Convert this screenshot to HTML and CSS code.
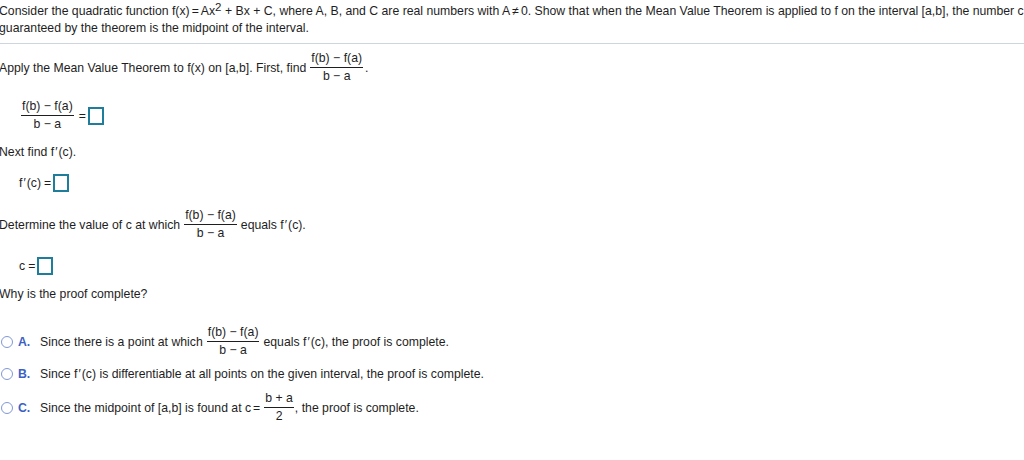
FILE: index.html
```html
<!DOCTYPE html>
<html>
<head>
<meta charset="utf-8">
<link rel="stylesheet" href="styles.css">
</head>
<body>
<div class="page">
  <div class="intro">Consider the quadratic function f(x)<span class="eq">=</span>Ax<sup class="sup">2</sup> + Bx + C, where A, B, and C are real numbers with A<span class="ne">≠</span>0. Show that when the Mean Value Theorem is applied to f on the interval [a,b], the number c<br>guaranteed by the theorem is the midpoint of the interval.</div>

  <div class="row r1">
    <span>Apply the Mean Value Theorem to f(x) on [a,b]. First, find</span>
    <span class="frac"><span class="num">f(b) − f(a)</span><span class="den">b − a</span></span><span class="dot">.</span>
  </div>

  <div class="row r2 indent22">
    <span class="frac f0"><span class="num">f(b) − f(a)</span><span class="den">b − a</span></span>
    <span class="eqs">=</span><span class="box"></span>
  </div>

  <div class="row r3">Next find f<span class="pr">′</span>(c).</div>

  <div class="row r4 indent20">
    <span>f<span class="pr">′</span>(c)</span><span class="eqs">=</span><span class="box"></span>
  </div>

  <div class="row r5">
    <span>Determine the value of c at which</span>
    <span class="frac"><span class="num">f(b) − f(a)</span><span class="den">b − a</span></span>
    <span>equals f<span class="pr">′</span>(c).</span>
  </div>

  <div class="row r6 indent20">
    <span>c</span><span class="eqs">=</span><span class="box"></span>
  </div>

  <div class="row r7">Why is the proof complete?</div>

  <div class="row opt oa">
    <span class="radio"></span><span class="lbl">A.</span>
    <span>Since there is a point at which</span>
    <span class="frac"><span class="num">f(b) − f(a)</span><span class="den">b − a</span></span>
    <span>equals f<span class="pr">′</span>(c), the proof is complete.</span>
  </div>

  <div class="row opt ob">
    <span class="radio"></span><span class="lbl">B.</span>
    <span>Since f<span class="pr">′</span>(c) is differentiable at all points on the given interval, the proof is complete.</span>
  </div>

  <div class="row opt oc">
    <span class="radio"></span><span class="lbl">C.</span>
    <span>Since the midpoint of [a,b] is found at c<span class="eq">=</span></span>
    <span class="frac fc"><span class="num">b + a</span><span class="den">2</span></span><span class="cm">, the proof is complete.</span>
  </div>
</div>
</body>
</html>
```

FILE: styles.css
```css
html, body {
  margin: 0;
  padding: 0;
  background: #ffffff;
  overflow: hidden;
}
body {
  width: 1024px;
  height: 460px;
}
.page {
  width: 1025px;
  margin-left: -1px;
  font-family: "Liberation Sans", Arial, sans-serif;
  font-size: 12.25px;
  color: #1e1e1e;
}
.intro {
  padding-top: 2px;
  padding-bottom: 6px;
  line-height: 17px;
  border-bottom: 1px solid #cfd5de;
  white-space: nowrap;
  overflow: hidden;
}
.sup {
  font-size: 11.5px;
  line-height: 10px;
  vertical-align: 4px;
}
.eq, .ne {
  margin: 0 2px;
}
.row {
  display: flex;
  align-items: center;
  white-space: nowrap;
  line-height: 14px;
}
.frac {
  display: inline-flex;
  flex-direction: column;
  align-items: stretch;
  text-align: center;
  margin: 0 4px;
}
.num {
  line-height: 13px;
  padding: 0 1px 2px;
}
.den {
  line-height: 13px;
  padding-top: 2px;
  border-top: 1px solid #1e1e1e;
}
.fc .num, .fc .den {
  padding-left: 1px;
  padding-right: 1px;
}
.fc {
  margin-left: 2px;
  margin-right: 1px;
}
.f0 {
  margin-left: 0;
  margin-right: 2px;
}
.dot {
  margin-left: -2px;
}
.pr {
  margin: 0 1px 0 1px;
}
.eqs {
  margin: 0 1px 0 3px;
}
.box {
  display: inline-block;
  box-sizing: border-box;
  width: 16px;
  height: 18px;
  border: 2px solid #1f7d9c;
  margin-left: 1px;
}
.indent22 { padding-left: 22px; }
.indent20 { padding-left: 20px; }

.r1 { margin-top: 8px; }
.r2 { margin-top: 17px; }
.r3 { margin-top: 14px; }
.r4 { margin-top: 15px; }
.r5 { margin-top: 17px; }
.r6 { margin-top: 17px; }
.r7 { margin-top: 12px; }
.oa { margin-top: 25px; }
.ob { margin-top: 10px; }
.oc { margin-top: 11px; }

.radio {
  display: inline-block;
  box-sizing: border-box;
  width: 12px;
  height: 12px;
  border: 1.5px solid #7f98d8;
  border-radius: 50%;
  margin-left: 2px;
  margin-right: 5px;
}
.lbl {
  font-weight: bold;
  color: #3c5fc4;
  width: 22px;
}
```
